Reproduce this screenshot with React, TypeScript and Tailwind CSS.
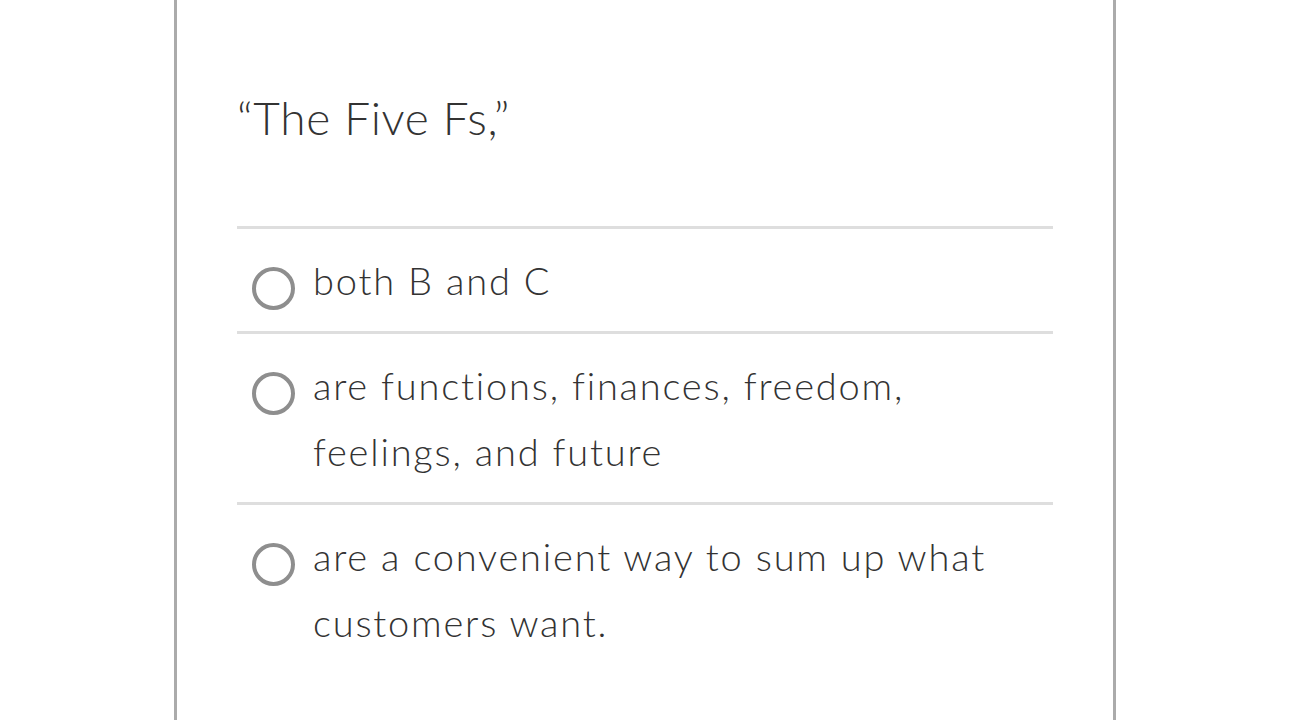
import React from "react";

const options = [
  "both B and C",
  "are functions, finances, freedom, feelings, and future",
  "are a convenient way to sum up what customers want.",
];

function Radio() {
  return (
    <span className="mt-[20px] box-border block h-[43px] w-[43px] shrink-0 rounded-full border-[4px] border-[#8e8e8e] bg-white" />
  );
}

export default function App() {
  return (
    <div
      className="min-h-[720px] w-full bg-white"
      style={{ fontFamily: "'Lato Light', Lato, 'Noto Sans', sans-serif" }}
    >
      <div className="ml-[174px] min-h-[720px] w-[942px] border-x-[3px] border-[#ababab] px-[60px]">
        <div className="pt-[90px] text-[46px] font-light leading-[55px] tracking-[0.7px] text-[#333333]">
          “The Five Fs,”
        </div>
        <div className="mt-[81px] border-t-[3px] border-[#dedede]">
          {options.map((o) => (
            <label
              key={o}
              className="flex items-start gap-[18px] border-b-[3px] border-[#dedede] py-[18px] pl-[15px] pr-[40px] last:border-b-0"
            >
              <Radio />
              <span className="text-[38px] font-light leading-[66px] tracking-[1.8px] text-[#333333]">
                {o}
              </span>
            </label>
          ))}
        </div>
      </div>
    </div>
  );
}
